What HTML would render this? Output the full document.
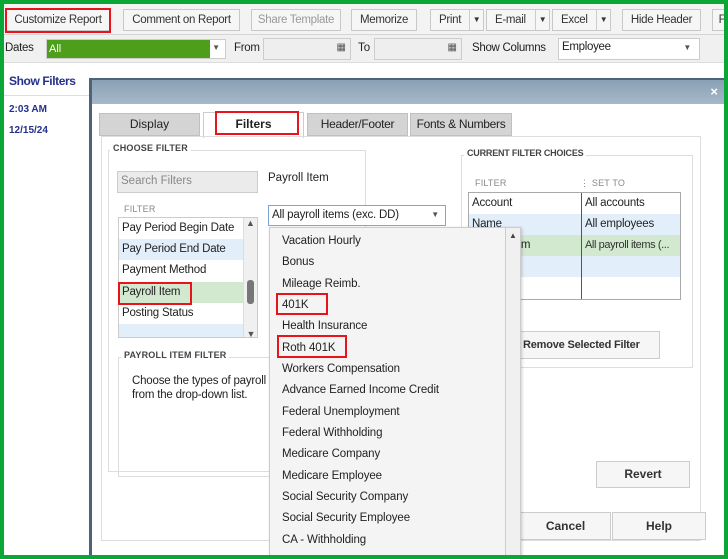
<!DOCTYPE html><html><head><style>
*{box-sizing:border-box;margin:0;padding:0}
body{width:728px;height:559px;position:relative;overflow:hidden;background:#fff;font-family:"Liberation Sans",Arial,sans-serif;font-size:12px;color:#222}
.a{position:absolute}
.btn{position:absolute;top:9px;height:22px;border:1px solid #c8c8c8;background:#f6f6f6;font-size:11.5px;letter-spacing:-0.3px;line-height:20px;text-align:center;color:#333}
.red{position:absolute;border:2px solid #e8141b}
.lbl{font-size:9px;font-weight:bold;color:#444;letter-spacing:.2px}
.it{position:absolute;left:12px;font-size:11.5px;color:#222;letter-spacing:-0.1px}
.row{position:absolute;left:0;width:100%;height:21px;line-height:21px;padding-left:3px;font-size:11.5px;white-space:nowrap;letter-spacing:-0.2px}
</style></head><body>
<div class="a" style="left:0;top:0;width:728px;height:559px;border:4px solid #0aa636;z-index:50;pointer-events:none"></div>
<div class="a" style="left:0;top:0;width:728px;height:35px;background:#f3f3f3;border-bottom:1px solid #d5d5d5"></div>
<div class="btn" style="left:6px;width:104px;background:#f6f6f6">Customize Report</div>
<div class="red" style="left:5px;top:8px;width:106px;height:25px"></div>
<div class="btn" style="left:123px;width:117px">Comment on Report</div>
<div class="btn" style="left:251px;width:90px;color:#999">Share Template</div>
<div class="btn" style="left:351px;width:66px">Memorize</div>
<div class="btn" style="left:430px;width:54px;text-align:left;padding-left:8px">Print<span style="position:absolute;right:0;top:0;width:14px;border-left:1px solid #ccc;font-size:8px;text-align:center">▼</span></div>
<div class="btn" style="left:486px;width:64px;text-align:left;padding-left:8px">E-mail<span style="position:absolute;right:0;top:0;width:14px;border-left:1px solid #ccc;font-size:8px;text-align:center">▼</span></div>
<div class="btn" style="left:552px;width:59px;text-align:left;padding-left:8px">Excel<span style="position:absolute;right:0;top:0;width:14px;border-left:1px solid #ccc;font-size:8px;text-align:center">▼</span></div>
<div class="btn" style="left:622px;width:79px">Hide Header</div>
<div class="btn" style="left:712px;width:20px">F</div>
<div class="a" style="left:0;top:35px;width:728px;height:28px;background:#f0f0f0;border-bottom:1px solid #ddd"></div>
<div class="a" style="left:5px;top:42px;font-size:11.5px;letter-spacing:-0.3px">Dates</div>
<div class="a" style="left:46px;top:39px;width:180px;height:20px;background:#fff;border:1px solid #ccc"><div style="width:163px;height:18px;background:#4e9d1b;color:#fff;font-size:11px;padding-left:2px;line-height:18px">All</div><span style="position:absolute;right:5px;top:3px;font-size:8px;color:#555">▼</span></div>
<div class="a" style="left:234px;top:42px;font-size:11.5px;letter-spacing:-0.3px">From</div>
<div class="a" style="left:263px;top:38px;width:88px;height:22px;background:#eee;border:1px solid #ccc"><span style="position:absolute;right:4px;top:3px;font-size:10px;color:#555">▦</span></div>
<div class="a" style="left:358px;top:42px;font-size:11.5px">To</div>
<div class="a" style="left:374px;top:38px;width:88px;height:22px;background:#eee;border:1px solid #ccc"><span style="position:absolute;right:4px;top:3px;font-size:10px;color:#555">▦</span></div>
<div class="a" style="left:472px;top:42px;font-size:11.5px;letter-spacing:-0.3px">Show Columns</div>
<div class="a" style="left:558px;top:38px;width:142px;height:22px;background:#fff;border:1px solid #ccc;padding:2px 3px;font-size:11.5px;letter-spacing:-0.3px">Employee<span style="position:absolute;right:8px;top:4px;font-size:8px;color:#555">▼</span></div>
<div class="a" style="left:9px;top:74px;font-weight:bold;color:#24318a;font-size:12px;letter-spacing:-0.4px">Show Filters</div>
<div class="a" style="left:0;top:95px;width:90px;border-top:1px solid #ddd"></div>
<div class="a" style="left:9px;top:104px;font-weight:bold;color:#24318a;font-size:10px">2:03 AM</div>
<div class="a" style="left:9px;top:125px;font-weight:bold;color:#24318a;font-size:10px">12/15/24</div>
<!-- dialog -->
<div class="a" style="left:89px;top:78px;width:640px;height:481px;background:#4d6478"></div>
<div class="a" style="left:92px;top:80px;width:636px;height:24px;background:linear-gradient(#8aa0b5,#a6b8c9)"><span style="position:absolute;right:10px;top:4px;color:#fff;font-weight:bold;font-size:13px">×</span></div>
<div class="a" style="left:92px;top:104px;width:636px;height:455px;background:#fff"></div>
<div class="a" style="left:99px;top:113px;width:101px;height:23px;background:#d4d4d4;border:1px solid #c0c0c0;text-align:center;line-height:21px;font-size:12px">Display</div>
<div class="a" style="left:203px;top:112px;width:101px;height:26px;background:#fff;border:1px solid #ccc;border-bottom:none;text-align:center;line-height:22px;font-weight:bold;font-size:12px">Filters</div>
<div class="red" style="left:215px;top:111px;width:84px;height:24px"></div>
<div class="a" style="left:307px;top:113px;width:101px;height:23px;background:#d4d4d4;border:1px solid #c0c0c0;text-align:center;line-height:21px;font-size:12px;letter-spacing:-0.3px">Header/Footer</div>
<div class="a" style="left:410px;top:113px;width:102px;height:23px;background:#d4d4d4;border:1px solid #c0c0c0;text-align:center;line-height:21px;font-size:12px;letter-spacing:-0.3px">Fonts &amp; Numbers</div>
<div class="a" style="left:101px;top:136px;width:600px;height:405px;border:1px solid #ddd"></div>
<!-- choose filter -->
<div class="a" style="left:108px;top:150px;width:258px;height:322px;border:1px solid #ddd"></div>
<div class="a lbl" style="left:110px;top:143px;background:#fff;padding:0 3px">CHOOSE FILTER</div>
<div class="a" style="left:117px;top:171px;width:141px;height:22px;background:#ebebeb;border:1px solid #ccc;color:#888;padding:3px;font-size:11.5px">Search Filters</div>
<div class="a" style="left:268px;top:172px;font-size:11.5px">Payroll Item</div>
<div class="a lbl" style="left:124px;top:204px;color:#888;font-weight:normal">FILTER</div>
<div class="a" style="left:118px;top:217px;width:140px;height:121px;border:1px solid #ccc;overflow:hidden">
<div class="row" style="top:0">Pay Period Begin Date</div>
<div class="row" style="top:21px;background:#e3eefb">Pay Period End Date</div>
<div class="row" style="top:42px">Payment Method</div>
<div class="row" style="top:64px;background:#d2e8cf">Payroll Item</div>
<div class="row" style="top:85px">Posting Status</div>
<div class="row" style="top:106px;background:#e3eefb"></div>
<div style="position:absolute;right:0;top:0;width:14px;height:121px;background:#f0f0f0;border-left:1px solid #ddd"><div style="font-size:9px;text-align:center;color:#555">▲</div><div style="position:absolute;left:3px;top:62px;width:7px;height:24px;background:#777;border-radius:3px"></div><div style="position:absolute;bottom:0;width:14px;font-size:9px;text-align:center;color:#555">▼</div></div>
</div>
<div class="red" style="left:118px;top:282px;width:74px;height:23px"></div>
<div class="a" style="left:268px;top:205px;width:178px;height:21px;border:1px solid #7ea6d1;background:#fff;font-size:11.5px;padding:3px 3px;letter-spacing:-0.2px">All payroll items (exc. DD)<span style="position:absolute;right:6px;top:4px;font-size:8px;color:#555">▼</span></div>
<div class="a" style="left:118px;top:357px;width:160px;height:120px;border:1px solid #ddd"></div>
<div class="a lbl" style="left:121px;top:350px;background:#fff;padding:0 3px">PAYROLL ITEM FILTER</div>
<div class="a" style="left:132px;top:374px;font-size:11.5px;line-height:14px;width:140px;white-space:nowrap;overflow:hidden;letter-spacing:-0.2px">Choose the types of payroll i<br>from the drop-down list.</div>
<!-- current filter -->
<div class="a" style="left:461px;top:155px;width:232px;height:213px;border:1px solid #ddd"></div>
<div class="a lbl" style="left:464px;top:148px;background:#fff;padding:0 3px;letter-spacing:-0.2px">CURRENT FILTER CHOICES</div>
<div class="a lbl" style="left:475px;top:178px;color:#888;font-weight:normal">FILTER</div>
<div class="a lbl" style="left:580px;top:178px;color:#888;font-weight:normal">⋮ SET TO</div>
<div class="a" style="left:468px;top:192px;width:213px;height:108px;border:1px solid #aaa;overflow:hidden">
<div class="row" style="top:0">Account</div>
<div class="row" style="top:21px;background:#e3eefb">Name</div>
<div class="row" style="top:42px;background:#d2e8cf">Payroll Item</div>
<div class="row" style="top:63px;background:#e3eefb"></div>
<div style="position:absolute;left:112px;top:0;height:108px;border-left:1px solid #555"></div>
<div class="row" style="top:0;left:113px;width:100px;overflow:hidden">All accounts</div>
<div class="row" style="top:21px;left:113px;width:100px;overflow:hidden">All employees</div>
<div class="row" style="top:42px;left:113px;width:100px;color:#333;overflow:hidden;font-size:11px;letter-spacing:-0.4px">All payroll items (...</div>
</div>
<div class="a" style="left:460px;top:331px;width:200px;height:28px;border:1px solid #ccc;background:#f6f6f6;font-weight:bold;color:#333;line-height:26px;padding-left:62px;font-size:11px;letter-spacing:-0.2px;white-space:nowrap">Remove Selected Filter</div>
<div class="a" style="left:596px;top:461px;width:94px;height:27px;border:1px solid #ccc;background:#f6f6f6;font-weight:bold;color:#333;line-height:25px;text-align:center">Revert</div>
<div class="a" style="left:510px;top:512px;width:101px;height:28px;border:1px solid #ccc;background:#f6f6f6;font-weight:bold;color:#333;line-height:26px;text-align:center;padding-left:10px">Cancel</div>
<div class="a" style="left:612px;top:512px;width:94px;height:28px;border:1px solid #ccc;background:#f6f6f6;font-weight:bold;color:#333;line-height:26px;text-align:center">Help</div>
<!-- dropdown list -->
<div class="a" style="left:269px;top:227px;width:252px;height:332px;background:#f4f4f4;border:1px solid #ccc;box-shadow:1px 1px 3px rgba(0,0,0,.2)">
<div style="position:absolute;right:0;top:0;width:15px;height:100%;background:#f0f0f0;border-left:1px solid #ccc"><div style="font-size:8px;text-align:center;color:#444;margin-top:3px">▲</div></div>
<div class="it" style="top:7px">Vacation Hourly</div>
<div class="it" style="top:28px">Bonus</div>
<div class="it" style="top:50px">Mileage Reimb.</div>
<div class="it" style="top:71px">401K</div>
<div class="it" style="top:92px">Health Insurance</div>
<div class="it" style="top:114px">Roth 401K</div>
<div class="it" style="top:135px">Workers Compensation</div>
<div class="it" style="top:156px">Advance Earned Income Credit</div>
<div class="it" style="top:178px">Federal Unemployment</div>
<div class="it" style="top:199px">Federal Withholding</div>
<div class="it" style="top:220px">Medicare Company</div>
<div class="it" style="top:242px">Medicare Employee</div>
<div class="it" style="top:263px">Social Security Company</div>
<div class="it" style="top:284px">Social Security Employee</div>
<div class="it" style="top:306px">CA - Withholding</div>
</div>
<div class="red" style="left:276px;top:293px;width:52px;height:22px"></div>
<div class="red" style="left:277px;top:335px;width:70px;height:23px"></div>
</body></html>
